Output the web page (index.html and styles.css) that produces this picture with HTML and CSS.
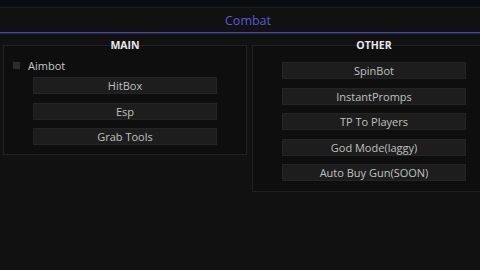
FILE: index.html
```html
<!DOCTYPE html>
<html>
<head>
<meta charset="utf-8">
<link rel="stylesheet" href="styles.css">
</head>
<body>
<div class="topstrip"></div>
<div class="tabbar"><span class="tab">Combat</span></div>
<div class="content">
  <section class="panel left">
    <div class="title">MAIN</div>
    <div class="toggle"><span class="box"></span><span>Aimbot</span></div>
    <div class="buttons first-after-toggle">
      <div class="btn">HitBox</div>
      <div class="btn">Esp</div>
      <div class="btn">Grab Tools</div>
    </div>
  </section>
  <section class="panel right">
    <div class="title">OTHER</div>
    <div class="buttons first-after-title">
      <div class="btn">SpinBot</div>
      <div class="btn">InstantPromps</div>
      <div class="btn">TP To Players</div>
      <div class="btn">God Mode(laggy)</div>
      <div class="btn">Auto Buy Gun(SOON)</div>
    </div>
  </section>
</div>
</body>
</html>
```
FILE: styles.css
```css
html, body {
  margin: 0;
  padding: 0;
  width: 480px;
  height: 270px;
  overflow: hidden;
  background: #111111;
  font-family: "Open Sans", "Noto Sans", sans-serif;
}
.topstrip {
  height: 7px;
  background: #0b0b12;
  border-bottom: 1px solid #1c1c24;
}
.tabbar {
  height: 24px;
  border-bottom: 1px solid #4848a8;
  box-shadow: 0 1px 1px rgba(72, 72, 168, 0.35);
  display: flex;
  align-items: center;
  justify-content: center;
}
.tab {
  color: #5a5ad4;
  font-size: 12.5px;
  margin-left: 16px;
  margin-top: 1px;
}
.content {
  display: flex;
  align-items: flex-start;
  gap: 5px;
  padding: 12px 0 0 3px;
  width: 480px;
  box-sizing: border-box;
  overflow: hidden;
}
.panel {
  width: 242px;
  flex: none;
  border: 1px solid #212121;
  background: #0e0e0e;
  display: flex;
  flex-direction: column;
  padding-bottom: 9px;
}
.panel.right {
  padding-bottom: 10px;
}
.title {
  margin-top: -7px;
  height: 12px;
  line-height: 12px;
  text-align: center;
  color: #e8e8e8;
  font-weight: 700;
  font-size: 10.5px;
}
.toggle {
  margin-top: 8px;
  height: 12px;
  display: flex;
  align-items: center;
  gap: 8px;
  padding-left: 9px;
  color: #c8c8c8;
  font-size: 11px;
}
.box {
  width: 7px;
  height: 7px;
  background: #2c2c2c;
}
.buttons {
  display: flex;
  flex-direction: column;
  gap: 8.5px;
  padding-left: 29px;
}
.first-after-toggle { margin-top: 6px; }
.first-after-title { margin-top: 11px; }
.btn {
  width: 184px;
  height: 17px;
  box-sizing: border-box;
  background: #1d1d1d;
  border: 1px solid #242424;
  color: #c0c0c0;
  font-size: 11px;
  line-height: 15px;
  text-align: center;
}
```
